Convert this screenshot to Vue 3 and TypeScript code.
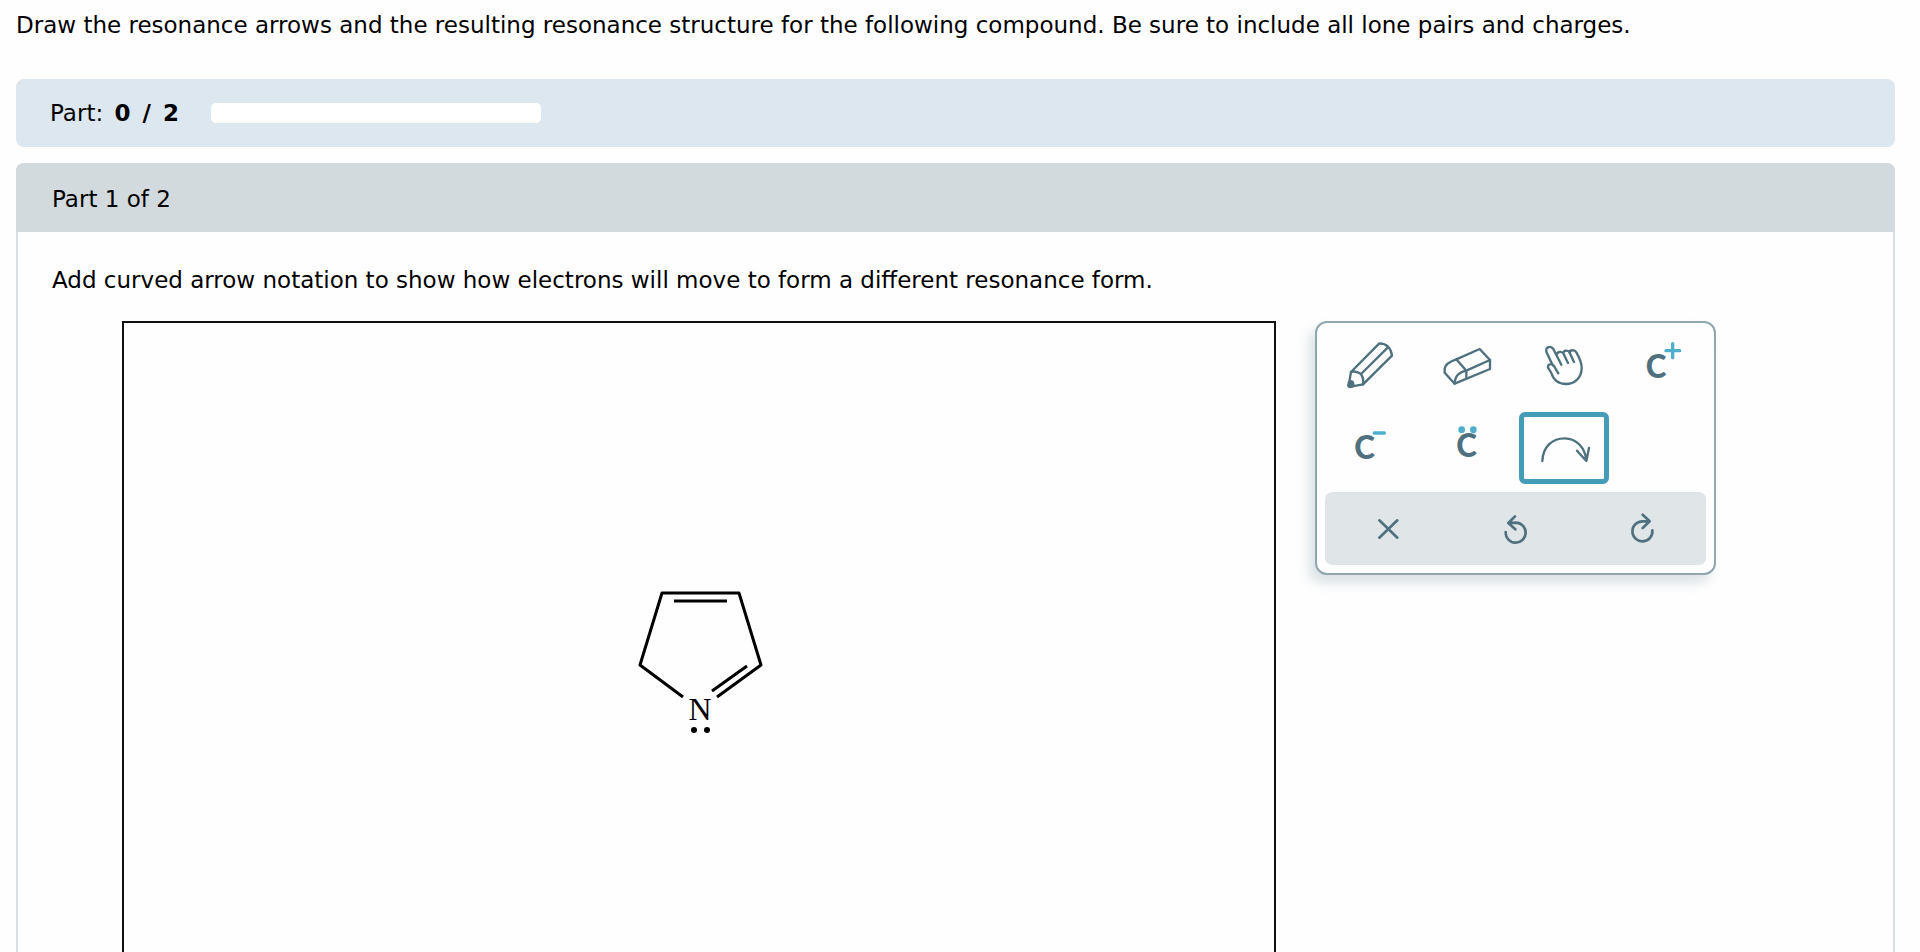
<script setup lang="ts">
import { ref } from 'vue'

interface Shape {
  d: string
  kind?: 'accent' | 'fill' | 'dot'
}

interface Tool {
  id: string
  label: string
  viewBox: string
  shapes: Shape[]
  letter?: { x: number; y: number }
}

const tools: Tool[] = [
  {
    id: 'pencil',
    label: 'Draw',
    viewBox: '105 87 270 216',
    shapes: [
      { d: 'M268 130L183 216L176 256Q176 260 182 260L219 253L306 167C303 145 292 131 268 130Z' },
      { d: 'M183 216Q197 211 213 222Q222 236 219 253M213 222L293 143' },
      { d: 'M177 246Q184 241 189 247Q191 254 188 259L181 261Q175 261 175 256Z', kind: 'fill' },
    ],
  },
  {
    id: 'eraser',
    label: 'Erase',
    viewBox: '396 87 270 216',
    shapes: [
      { d: 'M569 147L600 180V207L494 251L464 218V205C466 190 484 183 499 178Z' },
      { d: 'M499 178L529 212L600 180M529 212V236M529 212C508 217 495 225 494 251' },
    ],
  },
  {
    id: 'select',
    label: 'Select',
    viewBox: '57 87 270 216',
    shapes: [
      {
        d: 'M158 196L139 155C136 140 153 136 160 147L184 194M169 165C171 155 185 152 191 162L204 189M190 160C190 150 205 149 209 158L222 186M208 158C209 149 224 148 229 157C240 176 245 187 245 203C245 235 222 252 198 252C174 252 160 239 154 219L144 203C142 193 155 188 162 198L175 220',
      },
    ],
  },
  {
    id: 'plus',
    label: 'Add positive charge',
    viewBox: '348 87 270 216',
    letter: { x: 437, y: 234 },
    shapes: [{ d: 'M498 152H539M518 131V173', kind: 'accent' }],
  },
  {
    id: 'minus',
    label: 'Add negative charge',
    viewBox: '105 36 270 216',
    letter: { x: 193, y: 176 },
    shapes: [{ d: 'M253 99H283', kind: 'accent' }],
  },
  {
    id: 'lone-pair',
    label: 'Add lone pair',
    viewBox: '396 36 270 216',
    letter: { x: 499, y: 172 },
    shapes: [{ d: 'M515 89h0M550 89h0', kind: 'dot' }],
  },
  {
    id: 'arrow',
    label: 'Curved arrow',
    viewBox: '57 36 270 216',
    shapes: [{ d: 'M127 183C129 138 158 115 194 115C230 115 256 144 259 182M231 152L259 183L267 144' }],
  },
]

const actions: Tool[] = [
  { id: 'clear', label: 'Clear', viewBox: '244 333 108 108', shapes: [{ d: 'M269 361L323 413M323 361L269 413' }] },
  {
    id: 'undo',
    label: 'Undo',
    viewBox: '624 333 108 108',
    shapes: [{ d: 'M647 396A30 30 0 1 0 677 368L656 369M675 349L655 369L676 388' }],
  },
  {
    id: 'redo',
    label: 'Redo',
    viewBox: '375 333 108 108',
    shapes: [{ d: 'M457 391A30 30 0 1 1 427 364H449M428 344L449 364L428 384' }],
  },
]

const selected = ref('arrow')
const done = ref(0)
const total = 2
</script>

<template>
  <main class="page">
    <p class="question">
      Draw the resonance arrows and the resulting resonance structure for the following compound. Be sure to include all
      lone pairs and charges.
    </p>

    <div class="progress">
      <span>Part: <b class="count">{{ done }} <span class="slash">/</span> {{ total }}</b></span>
      <div class="track"><div class="bar" :style="{ width: (done / total) * 100 + '%' }"></div></div>
    </div>

    <section class="part">
      <h2 class="part-title">Part 1 of 2</h2>
      <p class="prompt">Add curved arrow notation to show how electrons will move to form a different resonance form.</p>
      <div class="workspace">
        <div class="canvas">
          <svg class="molecule" viewBox="635 590 128 144" role="img" aria-label="Five-membered nitrogen ring">
            <path
              d="M683 697L640 665L662 593H739L761 665L717 697M674 601H727M747 666L712 691"
            />
            <text x="700" y="720" text-anchor="middle">N</text>
            <circle cx="694" cy="730" r="3" />
            <circle cx="707" cy="730" r="3" />
          </svg>
        </div>

        <div class="toolbox">
          <div class="tools">
            <button
              v-for="tool in tools"
              :key="tool.id"
              type="button"
              class="tool"
              :class="{ selected: selected === tool.id }"
              :aria-label="tool.label"
              :aria-pressed="selected === tool.id"
              @click="selected = tool.id"
            >
              <svg class="tool-icon" :viewBox="tool.viewBox">
                <text v-if="tool.letter" :x="tool.letter.x" :y="tool.letter.y" class="letter">C</text>
                <path v-for="shape in tool.shapes" :key="shape.d" :d="shape.d" :class="shape.kind" />
              </svg>
            </button>
          </div>
          <div class="actions">
            <button v-for="action in actions" :key="action.id" type="button" class="action" :aria-label="action.label">
              <svg class="action-icon" :viewBox="action.viewBox">
                <path v-for="shape in action.shapes" :key="shape.d" :d="shape.d" />
              </svg>
            </button>
          </div>
        </div>
      </div>
    </section>
  </main>
</template>

<style>
body {
  margin: 0;
  background: #fefefe;
}
</style>

<style scoped>
.page {
  box-sizing: border-box;
  height: 100vh;
  overflow: hidden;
  padding: 9px 25px 0 16px;
  color: #000;
  font-family: Verdana, 'DejaVu Sans', sans-serif;
  font-size: 23px;
  line-height: 32px;
}

.question {
  margin: 0 0 38px;
}

.progress {
  display: flex;
  align-items: center;
  gap: 32px;
  height: 68px;
  margin-bottom: 16px;
  padding-left: 34px;
  border-radius: 8px;
  background: #dde7f0;
}

.count {
  margin-left: 4px;
}

.slash {
  margin: 0 4px;
}

.track {
  width: 330px;
  height: 20px;
  overflow: hidden;
  border-radius: 5px;
  background: #fff;
}

.bar {
  height: 100%;
  background: #459cb7;
}

.part {
  border: solid #d8dfe3;
  border-width: 0 2px;
  border-radius: 8px 8px 0 0;
}

.part-title {
  margin: 0 -2px;
  padding: 20px 36px 17px;
  border-radius: 8px 8px 0 0;
  background: #d3dadd;
  font-size: inherit;
  font-weight: 400;
}

.prompt {
  margin: 0;
  padding: 32px 34px 25px;
}

.workspace {
  display: flex;
  align-items: flex-start;
  gap: 39px;
  padding: 0 177px 0 104px;
}

.canvas {
  display: flex;
  flex: 1;
  align-items: center;
  justify-content: center;
  height: 678px;
  border: 2px solid #111;
  background: #fefefe;
}

.molecule {
  width: 128px;
  height: 144px;
}

.molecule text {
  font: 32px 'Liberation Serif', serif;
}

.toolbox {
  box-sizing: border-box;
  width: 401px;
  padding: 6px 4px 8px;
  border: 2px solid #90a6af;
  border-radius: 12px;
  background: #fefefe;
  box-shadow: -6px 8px 12px rgba(80, 115, 130, 0.2);
}

.tools {
  display: grid;
  grid-template-columns: repeat(4, 1fr);
  justify-items: center;
  row-gap: 11px;
}

.tool {
  display: flex;
  align-items: center;
  justify-content: center;
  box-sizing: border-box;
  width: 90px;
  height: 72px;
  padding: 0;
  border: 5px solid transparent;
  border-radius: 6px;
  background: none;
}

.tool.selected {
  border-color: #459cb7;
}

.tool-icon {
  flex: none;
  width: 90px;
  height: 72px;
}

.action-icon {
  width: 36px;
  height: 36px;
}

path {
  fill: none;
  stroke: #4f717f;
  stroke-width: 7px;
  stroke-linecap: round;
  stroke-linejoin: round;
}

.molecule path {
  stroke: #000;
  stroke-width: 3px;
  stroke-linecap: butt;
}

.action-icon path {
  stroke-width: 8px;
}

path.fill {
  fill: #4f717f;
}

path.accent {
  stroke: #4faecb;
  stroke-width: 10px;
}

path.dot {
  stroke: #4faecb;
  stroke-width: 20px;
}

.letter {
  fill: #4f717f;
  font: 900 94px Lato, sans-serif;
}

.actions {
  display: grid;
  grid-template-columns: repeat(3, 1fr);
  height: 73px;
  margin: 8px 4px 0;
  border-radius: 7px;
  background: #e0e6e8;
}

.action {
  display: flex;
  align-items: center;
  justify-content: center;
  padding: 0;
  border: 0;
  background: none;
}
</style>
